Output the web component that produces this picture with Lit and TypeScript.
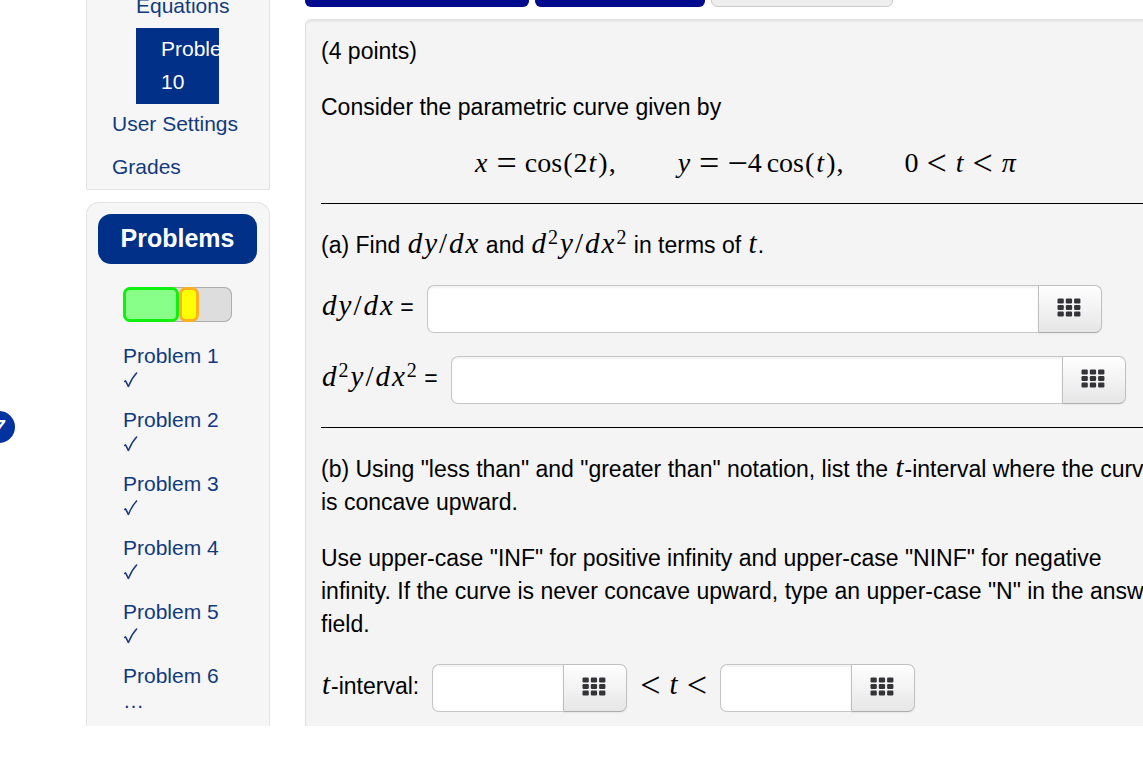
import { LitElement, html, css, svg } from "lit";
import { customElement, property } from "lit/decorators.js";

/** Text box joined to a keypad button that opens the equation editor. */
@customElement("answer-box")
class AnswerBox extends LitElement {
  @property() label = "";
  @property({ type: Boolean, reflect: true }) small = false;

  static styles = css`
    :host { display: flex; width: 675px; height: 48px; }
    :host([small]) { width: 195px; }
    .box {
      flex: 1; min-width: 0; box-sizing: border-box; padding: 6px 10px;
      border: 1px solid #c6c6c6; border-right: 0; border-radius: 7px 0 0 7px;
      background: #fff; box-shadow: inset 0 2px 2px rgba(0, 0, 0, 0.05);
      font: 23px "Liberation Sans", Arial, sans-serif; outline: 0;
    }
    .pad {
      width: 64px; box-sizing: border-box; padding: 0 2px 4px 0;
      display: flex; align-items: center; justify-content: center;
      border: 1px solid #c0c0c0; border-bottom-color: #adadad; border-radius: 0 7px 7px 0;
      background: linear-gradient(#fff, #e6e6e6); box-shadow: 0 1px 2px rgba(0, 0, 0, 0.06);
    }
  `;

  render() {
    return html`
      <input class="box" type="text" aria-label=${this.label} />
      <button class="pad" type="button" aria-label="Equation editor">
        <svg width="24" height="19" viewBox="0 0 24 19" fill="#333338">
          ${[0, 1, 2].map((r) => [0, 1, 2].map((c) => svg`
            <rect x=${0.5 + c * 8.3} y=${0.5 + r * 6.5} width="6.3" height="5" rx="1.2"></rect>`))}
        </svg>
      </button>`;
  }
}

@customElement("app-root")
class AppRoot extends LitElement {
  static styles = css`
    :host {
      display: block; position: relative; overflow: hidden; background: #fff; color: #000;
      font: 23px/33px "Liberation Sans", Arial, sans-serif;
    }
    .page {
      display: grid; grid-template-columns: 184px minmax(0, 1fr); column-gap: 35px;
      margin: -41px -43px 0 86px;
    }
    .badge {
      position: absolute; left: -17px; top: 411px; width: 32px; height: 32px; border-radius: 50%;
      background: #0033a0; color: #fff; text-align: center; font-size: 20px; line-height: 32px;
      font-weight: bold; font-style: italic;
    }

    .side { display: flex; flex-direction: column; gap: 12px; font-size: 21px; }
    .side a { color: #123a7c; text-decoration: none; }
    .card { background: #f6f6f6; border: 1px solid #e3e3e3; }
    .nav { border-top: 0; padding: 30px 25px 6px; display: flex; flex-direction: column; }
    .nav .sub { margin-left: 24px; }
    .nav a.current {
      margin: 6px 25px 3px 24px; padding: 4px 0 6px 25px; overflow: hidden;
      background: #003087; color: #fff;
    }
    .nav .top { padding-bottom: 10px; }
    .nav .last { padding-bottom: 0; }
    .list {
      flex: 1; display: flex; flex-direction: column; border-bottom: 0;
      border-radius: 13px 13px 0 0; padding: 11px 12px 0 11px;
    }
    .title {
      margin: 0; border-radius: 13px; background: #003087; color: #fff; text-align: center;
      font-size: 25px; line-height: 48px; padding-bottom: 2px; font-weight: bold;
    }
    .progress {
      display: flex; box-sizing: border-box; height: 35px; margin: 23px 25px 21px;
      background: #ddd; border-radius: 8px; box-shadow: inset 0 0 0 1px #aeaeae;
    }
    .done, .part { box-sizing: border-box; border: 3px solid #12f012; border-radius: 7px; background: #88ff88; }
    .part { border-color: #ffb020; background: #ffff00; }
    .items { list-style: none; margin: 0 25px; padding: 0; line-height: 25px; }
    .items li { height: 50px; margin-bottom: 14px; }
    .items li:last-child { margin-bottom: 0; }
    .items a { display: block; }
    .mark { display: block; margin-top: 3px; }

    .tabs { display: flex; gap: 6px; height: 48px; }
    .tab { border: 0; border-radius: 6px; background: #000a8c; padding: 0; width: 224px; }
    .tab.mid { width: 170px; }
    .tab.off { width: 182px; background: #eee; border: 1px solid #ccc; }
    .problem {
      margin-top: 12px; padding: 15px 15px 14px; background: #f4f4f4;
      border: 1px solid #e1e1e1; border-bottom: 0; border-radius: 6px 6px 0 0;
      box-shadow: inset 0 2px 2px rgba(0, 0, 0, 0.05);
    }
    p { margin: 0 0 23px; }
    .rule { border: 0; border-top: 1px solid #000; margin: 23px 0 25px; }
    .equation { display: flex; justify-content: center; gap: 61px; margin-bottom: 23px; height: 33px; }
    .row { display: flex; align-items: center; gap: 13px; margin-bottom: 23px; }
    .row.end { margin-bottom: 0; }
    .label { padding-bottom: 4px; }

    .m { font-family: "Liberation Serif", "Times New Roman", serif; font-size: 29px; line-height: 1px; white-space: nowrap; }
    .equation .m { font-size: 28px; line-height: 31px; }
    .m i, .m b { margin: 0 1px; font-weight: normal; }
    .m sup { font-size: 20px; line-height: 1px; vertical-align: 9px; margin: 0 1px; }
    .m .rel, .m .neg { font-size: 36px; line-height: 1px; vertical-align: -3px; }
    .m .rel { margin: 0 8px; }
    .m .open { margin-left: 0; }
    .m .close { margin-right: 0; }
    .m .fn { margin-left: 5px; }
  `;

  private dydx = html`<span class="m"><i>d</i><i>y</i><b>/</b><i>d</i><i>x</i></span>`;
  private d2ydx2 = html`<span class="m"><i>d</i><sup>2</sup><i>y</i><b>/</b><i>d</i><i>x</i><sup>2</sup></span>`;
  private t = html`<span class="m"><i>t</i></span>`;

  private item(n: number) {
    return html`<li><a href="#p${n}">Problem ${n}
      ${n < 6
        ? html`<svg class="mark" width="16" height="18" viewBox="0 0 16 18" fill="none" stroke="#123a7c">
            <path d="M1.2 10.8 L2.6 10 L5.4 15.4" stroke-width="1.6"></path>
            <path d="M5.2 16 Q8.5 7.5 14 1.6" stroke-width="1.4"></path>
          </svg>`
        : html`<br />…`}</a></li>`;
  }

  render() {
    return html`
      <div class="page">
        <div class="side">
          <nav class="card nav">
            <a class="sub" href="#equations">Equations</a>
            <a class="current" href="#p10">Problem 10</a>
            <a class="top" href="#settings">User Settings</a>
            <a class="top last" href="#grades">Grades</a>
          </nav>
          <section class="card list">
            <h2 class="title">Problems</h2>
            <div class="progress">
              <div class="done" style="width:51%"></div>
              <div class="part" style="width:19%"></div>
            </div>
            <ul class="items">${[1, 2, 3, 4, 5, 6].map((n) => this.item(n))}</ul>
          </section>
        </div>
        <main>
          <div class="tabs">
            <button class="tab" type="button" aria-label="Previous Problem"></button>
            <button class="tab mid" type="button" aria-label="Problem List"></button>
            <button class="tab off" type="button" aria-label="Next Problem" disabled></button>
          </div>
          <section class="problem">
            <p>(4 points)</p>
            <p>Consider the parametric curve given by</p>
            <div class="equation">
              <span class="m"><i>x</i><span class="rel">=</span>cos<b>(</b>2<i>t</i><b>)</b>,</span>
              <span class="m"><i>y</i><span class="rel">=</span><span class="neg">−</span>4<span class="fn">cos</span><b>(</b><i>t</i><b>)</b>,</span>
              <span class="m">0<span class="rel">&lt;</span><i>t</i><span class="rel">&lt;</span><i>π</i></span>
            </div>
            <hr class="rule" />
            <p>(a) Find ${this.dydx} and ${this.d2ydx2} in terms of ${this.t}.</p>
            <div class="row">
              <span class="label">${this.dydx} =</span><answer-box label="dy/dx"></answer-box>
            </div>
            <div class="row">
              <span class="label">${this.d2ydx2} =</span><answer-box label="Second derivative"></answer-box>
            </div>
            <hr class="rule" />
            <p>(b) Using "less than" and "greater than" notation, list the ${this.t}-interval where the curve is concave upward.</p>
            <p>Use upper-case "INF" for positive infinity and upper-case "NINF" for negative infinity. If the curve is never concave upward, type an upper-case "N" in the answer field.</p>
            <div class="row end">
              <span class="label">${this.t}-interval:</span>
              <answer-box small label="Lower bound"></answer-box>
              <span class="label"><span class="m"><span class="rel open">&lt;</span><i>t</i><span class="rel close">&lt;</span></span></span>
              <answer-box small label="Upper bound"></answer-box>
            </div>
          </section>
        </main>
      </div>
      <div class="badge">7</div>`;
  }
}
